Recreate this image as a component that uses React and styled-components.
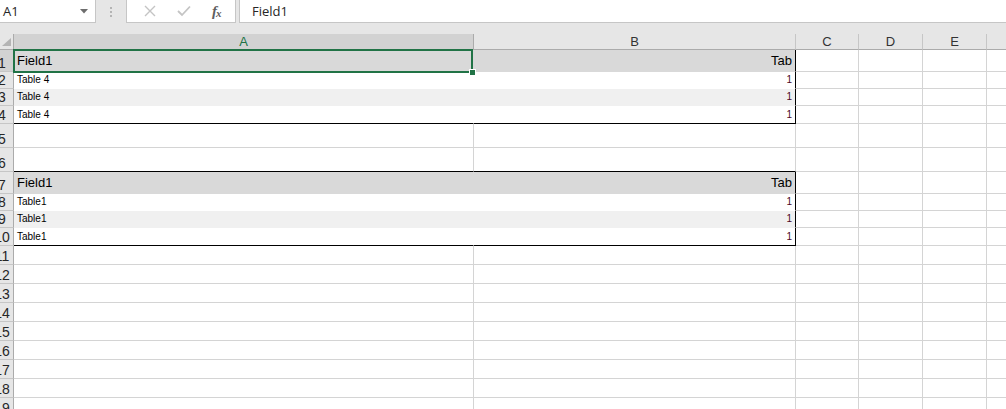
import React from "react"
import styled, { createGlobalStyle } from "styled-components"

const GlobalStyle = createGlobalStyle`
    html, body {
        margin: 0;
        padding: 0;
        background: #ffffff;
        overflow: hidden;
    }
`

const GRID = "#d4d4d4"
const GREEN = "#217346"
const COLS = "14px 460px 322px 63px 64px 64px 64px"

const Page = styled.div`
    width: 1006px;
    height: 409px;
    overflow: hidden;
    background: #ffffff;
    font-family: "Liberation Sans", Arial, sans-serif;
`

const FormulaBar = styled.div`
    display: flex;
    height: 24px;
    background: #e6e6e6;
    font-family: "Open Sans", "Noto Sans", sans-serif;
`

const NameBox = styled.div`
    width: 96px;
    height: 23px;
    box-sizing: border-box;
    display: flex;
    align-items: center;
    justify-content: space-between;
    padding: 0 7px 0 3px;
    background: #ffffff;
    border-right: 1px solid #c6c6c6;
    border-bottom: 1px solid #c6c6c6;
    font-size: 13px;
    color: #262626;
`

const Grip = styled.div`
    width: 30px;
    display: flex;
    flex-direction: column;
    align-items: center;
    justify-content: center;
    gap: 2px;
    padding-bottom: 1px;
`

const Dot = styled.span`
    width: 2px;
    height: 2px;
    background: #b4b4b4;
`

const FuncBox = styled.div`
    width: 110px;
    height: 23px;
    box-sizing: border-box;
    display: flex;
    align-items: center;
    justify-content: space-around;
    padding: 0 4px 0 6px;
    background: #ffffff;
    border: 1px solid #c6c6c6;
    border-top: none;
`

const Fx = styled.span`
    font-family: "Liberation Serif", "DejaVu Serif", serif;
    font-style: italic;
    font-weight: bold;
    font-size: 15px;
    color: #5f5f5f;
    letter-spacing: -1px;

    sub {
        font-size: 11px;
        vertical-align: -1px;
    }
`

const Input = styled.div`
    flex: 1;
    height: 23px;
    box-sizing: border-box;
    margin-left: 3px;
    padding-left: 12px;
    display: flex;
    align-items: center;
    background: #ffffff;
    border-left: 1px solid #c6c6c6;
    border-bottom: 1px solid #c6c6c6;
    font-size: 13px;
    color: #262626;
`

const Band = styled.div`
    height: 10px;
    background: #e6e6e6;
`

const Row = styled.div`
    display: grid;
    grid-template-columns: ${COLS};
    height: ${p => p.$h}px;
`

const Corner = styled.div`
    background: #e6e6e6;
    box-sizing: border-box;
    border-right: 1px solid #ababab;
    border-bottom: 1px solid #ababab;
    display: flex;
    align-items: flex-end;
    justify-content: flex-end;
    padding: 0 2px 3px 0;
`

const ColHead = styled.div`
    box-sizing: border-box;
    display: flex;
    align-items: flex-end;
    justify-content: center;
    padding-bottom: 1px;
    background: ${p => (p.$active ? "#d2d2d2" : "#e6e6e6")};
    border-right: 1px solid ${p => (p.$active ? "#ababab" : "#c6c6c6")};
    border-bottom: 1px solid #ababab;
    color: ${p => (p.$active ? GREEN : "#333333")};
    font-size: 13px;
    line-height: 1;
    overflow: hidden;
`

const RowHead = styled.div`
    box-sizing: border-box;
    display: flex;
    align-items: flex-end;
    overflow: hidden;
    background: ${p => (p.$active ? "#d2d2d2" : "#e6e6e6")};
    border-right: 1px solid #ababab;
    border-bottom: 1px solid #c6c6c6;
    padding-bottom: 1px;

    span {
        flex-shrink: 0;
        width: 28px;
        margin-left: -12px;
        text-align: center;
        font-size: 14px;
        line-height: 1;
        color: #262626;
    }
`

const Cell = styled.div`
    position: relative;
    box-sizing: border-box;
    display: flex;
    align-items: flex-end;
    justify-content: ${p => (p.$right ? "flex-end" : "flex-start")};
    padding: 0 3px ${p => (p.$head ? 4 : 3)}px 3px;
    background: ${p => p.$fill || "#ffffff"};
    border-right: 1px solid ${p => p.$rc || GRID};
    border-bottom: 1px solid ${p => p.$bc || GRID};
    font-size: ${p => (p.$head ? 13 : 10)}px;
    line-height: 1;
    white-space: nowrap;
    color: ${p => (p.$num ? "#4c0626" : "#000000")};
`

const Selection = styled.div`
    position: absolute;
    z-index: 5;
    top: -1px;
    left: -1px;
    right: 0;
    bottom: -2px;
    border: 2px solid ${GREEN};
    pointer-events: none;
`

const Handle = styled.div`
    position: absolute;
    right: -5px;
    bottom: -5px;
    width: 5px;
    height: 5px;
    background: ${GREEN};
    border: 1px solid #ffffff;
`

const HEAD_FILL = "#d9d9d9"

const rows = [
    { n: 1, h: 22, kind: "head", a: "Field1", b: "Tab" },
    { n: 2, h: 17, kind: "row", fill: "#ffffff", a: "Table 4", b: "1" },
    { n: 3, h: 17, kind: "row", fill: "#f0f0f0", a: "Table 4", b: "1" },
    { n: 4, h: 18, kind: "row", fill: "#ffffff", a: "Table 4", b: "1", last: true },
    { n: 5, h: 24 },
    { n: 6, h: 24, before: true },
    { n: 7, h: 22, kind: "head", a: "Field1", b: "Tab" },
    { n: 8, h: 17, kind: "row", fill: "#ffffff", a: "Table1", b: "1" },
    { n: 9, h: 17, kind: "row", fill: "#f0f0f0", a: "Table1", b: "1" },
    { n: 10, h: 18, kind: "row", fill: "#ffffff", a: "Table1", b: "1", last: true },
    ...[11, 12, 13, 14, 15, 16, 17, 18, 19].map(n => ({ n, h: 19 })),
]

const XIcon = () => (
    <svg width="12" height="12" viewBox="0 0 12 12">
        <path d="M1 1 L11 11 M11 1 L1 11" stroke="#c4c4c4" strokeWidth="1.4" fill="none" />
    </svg>
)

const CheckIcon = () => (
    <svg width="14" height="12" viewBox="0 0 14 12">
        <path d="M1 6 L5 10 L13 1.5" stroke="#c4c4c4" strokeWidth="1.8" fill="none" />
    </svg>
)

const Caret = () => (
    <svg width="8" height="5" viewBox="0 0 8 5">
        <path d="M0 0 L8 0 L4 4.5 Z" fill="#6d6d6d" />
    </svg>
)

const Triangle = () => (
    <svg width="9" height="8" viewBox="0 0 9 8">
        <path d="M9 0 L9 8 L0 8 Z" fill="#b4b4b4" />
    </svg>
)

const SheetRow = ({ row }) => {
    const inTable = !!row.kind
    const head = row.kind === "head"
    const fill = head ? HEAD_FILL : row.fill
    const black = row.last || row.before ? "#000000" : null

    return (
        <Row $h={row.h}>
            <RowHead $active={row.n === 1}>
                <span>{row.n}</span>
            </RowHead>
            <Cell
                $head={head}
                $fill={fill}
                $rc={inTable ? fill : GRID}
                $bc={black || (inTable ? fill : GRID)}
            >
                {row.a}
                {row.n === 1 && (
                    <Selection>
                        <Handle />
                    </Selection>
                )}
            </Cell>
            <Cell
                $head={head}
                $right
                $num={!head}
                $fill={fill}
                $rc={inTable ? "#000000" : GRID}
                $bc={black || (inTable ? fill : GRID)}
            >
                {row.b}
            </Cell>
            <Cell />
            <Cell />
            <Cell />
            <Cell />
        </Row>
    )
}

const App = () => {
    return (
        <Page>
            <GlobalStyle />
            <FormulaBar>
                <NameBox>
                    A1
                    <Caret />
                </NameBox>
                <Grip>
                    <Dot />
                    <Dot />
                    <Dot />
                </Grip>
                <FuncBox>
                    <XIcon />
                    <CheckIcon />
                    <Fx>
                        f<sub>x</sub>
                    </Fx>
                </FuncBox>
                <Input>Field1</Input>
            </FormulaBar>
            <Band />
            <Row $h={16}>
                <Corner>
                    <Triangle />
                </Corner>
                <ColHead $active>A</ColHead>
                <ColHead>B</ColHead>
                <ColHead>C</ColHead>
                <ColHead>D</ColHead>
                <ColHead>E</ColHead>
                <ColHead>F</ColHead>
            </Row>
            {rows.map(row => (
                <SheetRow key={row.n} row={row} />
            ))}
        </Page>
    )
}

export default App
